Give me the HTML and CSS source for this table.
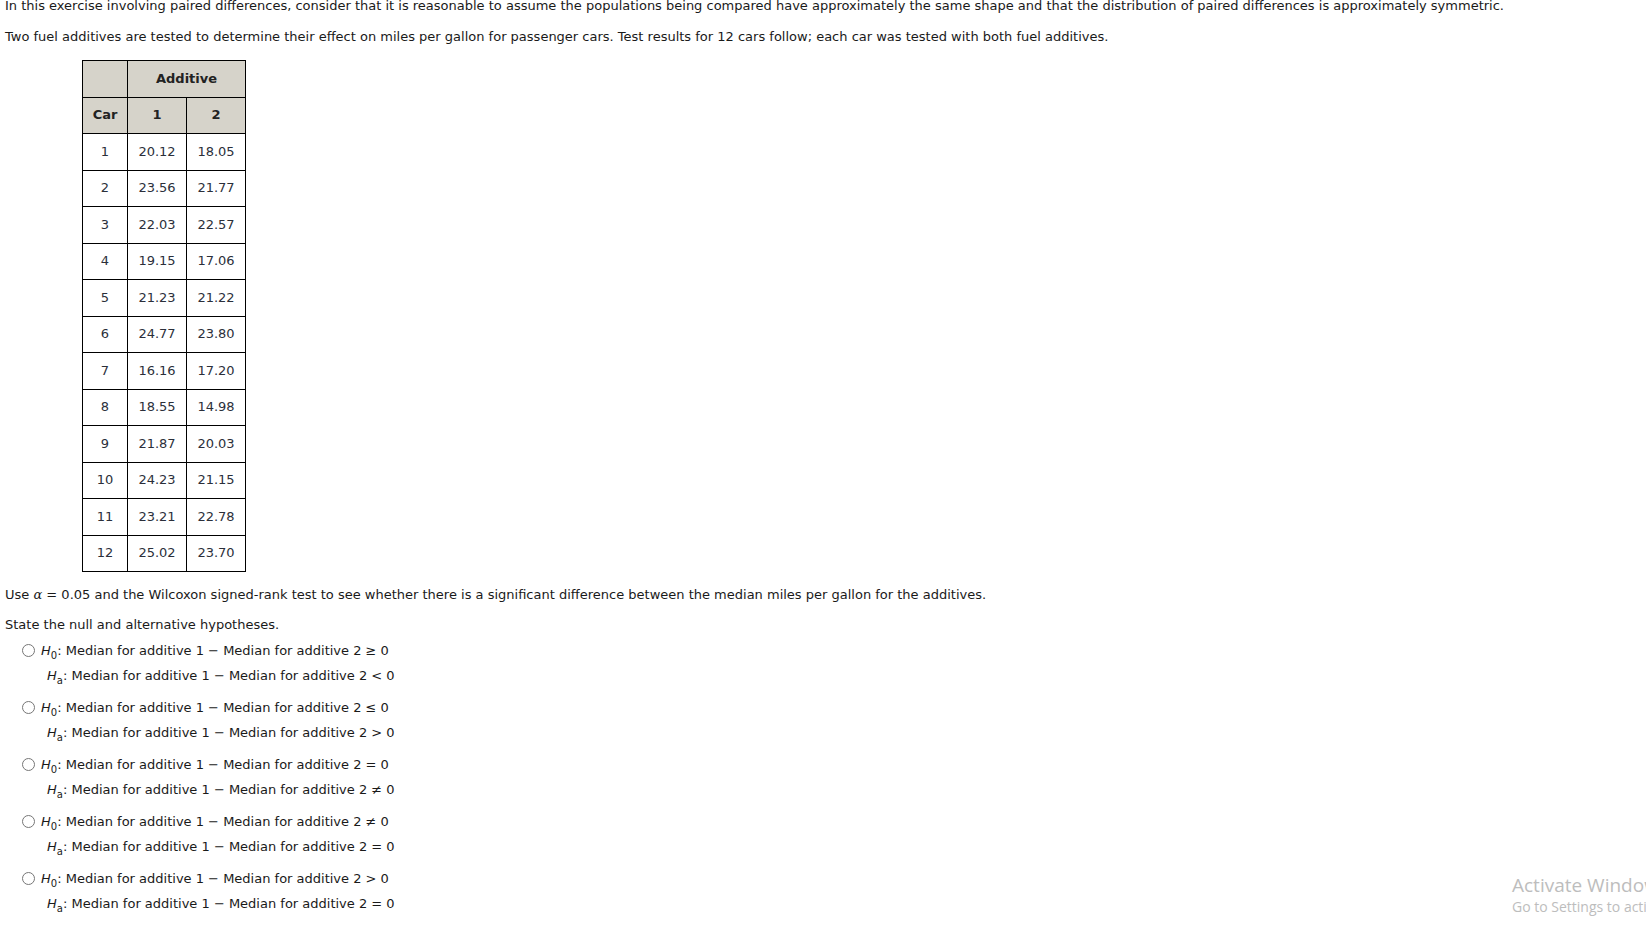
FILE: index.html
```html
<!DOCTYPE html>
<html lang="en">
<head>
  <meta charset="UTF-8">
  <title>Paired Differences</title>
  <link rel="stylesheet" href="styles.css">
</head>
<body>

  <div class="question">
    <p class="intro">In this exercise involving paired differences, consider that it is reasonable to assume the populations being compared have approximately the same shape and that the distribution of paired differences is approximately symmetric.</p>
    <p>Two fuel additives are tested to determine their effect on miles per gallon for passenger cars. Test results for 12 cars follow; each car was tested with both fuel additives.</p>

    <table class="data">
      <thead>
        <tr>
          <th></th>
          <th colspan="2">Additive</th>
        </tr>
        <tr>
          <th>Car</th>
          <th>1</th>
          <th>2</th>
        </tr>
      </thead>
      <tbody>
        <tr><td>1</td><td>20.12</td><td>18.05</td></tr>
        <tr><td>2</td><td>23.56</td><td>21.77</td></tr>
        <tr><td>3</td><td>22.03</td><td>22.57</td></tr>
        <tr><td>4</td><td>19.15</td><td>17.06</td></tr>
        <tr><td>5</td><td>21.23</td><td>21.22</td></tr>
        <tr><td>6</td><td>24.77</td><td>23.80</td></tr>
        <tr><td>7</td><td>16.16</td><td>17.20</td></tr>
        <tr><td>8</td><td>18.55</td><td>14.98</td></tr>
        <tr><td>9</td><td>21.87</td><td>20.03</td></tr>
        <tr><td>10</td><td>24.23</td><td>21.15</td></tr>
        <tr><td>11</td><td>23.21</td><td>22.78</td></tr>
        <tr><td>12</td><td>25.02</td><td>23.70</td></tr>
      </tbody>
    </table>

    <p class="use">Use <span class="math">&alpha;</span> = 0.05 and the Wilcoxon signed-rank test to see whether there is a significant difference between the median miles per gallon for the additives.</p>
    <p class="state">State the null and alternative hypotheses.</p>

    <ul class="choices">
      <li>
        <label class="choice">
          <input type="radio" name="hyp">
          <span class="lines">
            <span class="h0"><i>H</i><sub>0</sub>: Median for additive 1 &minus; Median for additive 2 &ge; 0</span>
            <span class="ha"><i>H</i><sub>a</sub>: Median for additive 1 &minus; Median for additive 2 &lt; 0</span>
          </span>
        </label>
      </li>
      <li>
        <label class="choice">
          <input type="radio" name="hyp">
          <span class="lines">
            <span class="h0"><i>H</i><sub>0</sub>: Median for additive 1 &minus; Median for additive 2 &le; 0</span>
            <span class="ha"><i>H</i><sub>a</sub>: Median for additive 1 &minus; Median for additive 2 &gt; 0</span>
          </span>
        </label>
      </li>
      <li>
        <label class="choice">
          <input type="radio" name="hyp">
          <span class="lines">
            <span class="h0"><i>H</i><sub>0</sub>: Median for additive 1 &minus; Median for additive 2 = 0</span>
            <span class="ha"><i>H</i><sub>a</sub>: Median for additive 1 &minus; Median for additive 2 &ne; 0</span>
          </span>
        </label>
      </li>
      <li>
        <label class="choice">
          <input type="radio" name="hyp">
          <span class="lines">
            <span class="h0"><i>H</i><sub>0</sub>: Median for additive 1 &minus; Median for additive 2 &ne; 0</span>
            <span class="ha"><i>H</i><sub>a</sub>: Median for additive 1 &minus; Median for additive 2 = 0</span>
          </span>
        </label>
      </li>
      <li>
        <label class="choice">
          <input type="radio" name="hyp">
          <span class="lines">
            <span class="h0"><i>H</i><sub>0</sub>: Median for additive 1 &minus; Median for additive 2 &gt; 0</span>
            <span class="ha"><i>H</i><sub>a</sub>: Median for additive 1 &minus; Median for additive 2 = 0</span>
          </span>
        </label>
      </li>
    </ul>
  </div>

  <div class="watermark">
    <div class="wm-title">Activate Windows</div>
    <div class="wm-sub">Go to Settings to activate Windows.</div>
  </div>

</body>
</html>
```

FILE: styles.css
```css
html, body {
  overflow: hidden;
}
body {
  margin: 0;
  padding: 0 5px;
  font-family: "DejaVu Sans", Verdana, sans-serif;
  font-size: 13px;
  color: #1a1a1a;
  background: #fff;
}
p {
  margin: 0 0 15px 0;
  line-height: 16px;
}
.intro {
  margin-top: -2px;
}
table.data {
  border-collapse: collapse;
  margin: 13px 0 15px 77px;
  color: #2b2f3a;
}
.data th, .data td {
  border: 1px solid #000;
  height: 35.5px;
  padding: 0;
  text-align: center;
  line-height: 16px;
}
.data th {
  background: #d6d3ca;
  font-weight: bold;
  color: #222;
}
.data th:first-child, .data td:first-child {
  width: 44px;
}
.data thead tr:first-child th:last-child {
  width: 117px;
}
.data thead tr:last-child th:not(:first-child) {
  width: 58px;
}
.math {
  font-family: "DejaVu Serif", serif;
  font-style: italic;
}
.use {
  margin-bottom: 14px;
}
.state {
  margin-bottom: 9px;
}
.choices {
  list-style: none;
  margin: 0;
  padding: 0 0 0 17px;
}
.choices li {
  margin-bottom: 14px;
}
.choice {
  display: flex;
  align-items: flex-start;
}
.choice input {
  margin: 2px 6px 0 0;
  width: 13px;
  height: 13px;
}
.lines {
  display: flex;
  flex-direction: column;
  gap: 7px;
}
.lines i {
  font-style: italic;
}
.lines sub {
  font-size: 10px;
  line-height: 0;
  vertical-align: -4px;
}
.ha {
  padding-left: 6px;
}
.h0, .ha {
  line-height: 18px;
}
.watermark {
  position: absolute;
  left: 1512px;
  top: 873px;
  color: #bdbdbd;
  font-family: "Open Sans", sans-serif;
  white-space: nowrap;
}
.wm-title {
  font-size: 19px;
  line-height: 24px;
}
.wm-sub {
  font-size: 14px;
  line-height: 20px;
}
```
